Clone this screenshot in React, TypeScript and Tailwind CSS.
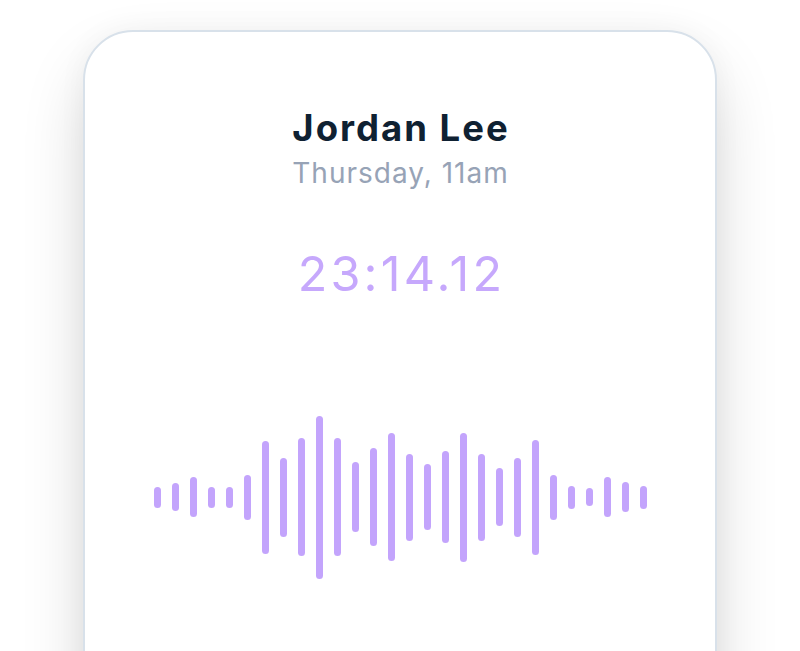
import React from "react";

const heights = [21, 28, 40, 21, 21, 45, 113, 79, 118, 163, 118, 70, 98, 128, 87, 66, 92, 129, 87, 58, 79, 115, 45, 23, 18, 40, 30, 23];

export default function App() {
  return (
    <div className="w-full h-[651px] overflow-hidden bg-white" style={{ fontFamily: "Inter, 'Noto Sans', sans-serif" }}>
      <div className="mx-auto mt-[30px] w-[634px] h-[700px] rounded-[50px] border-2 border-[#d8e1ea] bg-white shadow-[0_30px_70px_-10px_rgba(0,0,0,0.2),0_0_30px_rgba(0,0,0,0.04)] flex flex-col items-center pt-[76px]">
        <div className="text-[36.5px] leading-[40px] font-bold text-[#0f2132] tracking-[2px] pl-[2px]">Jordan Lee</div>
        <div className="mt-[9px] text-[28px] leading-[32px] text-[#97a3b6] tracking-[1px] pl-[1px]">Thursday, 11am</div>
        <div className="mt-[61px] text-[48.5px] leading-[48px] font-normal text-[#c6a8fc] tracking-[3.2px] pl-[3px]">23:14.12</div>
        <div className="mt-[117px] h-[164px] flex items-center gap-[11px]">
          {heights.map((h, i) => (
            <div key={i} className="w-[7px] rounded-full bg-[#c3a4fc]" style={{ height: h }} />
          ))}
        </div>
      </div>
    </div>
  );
}
